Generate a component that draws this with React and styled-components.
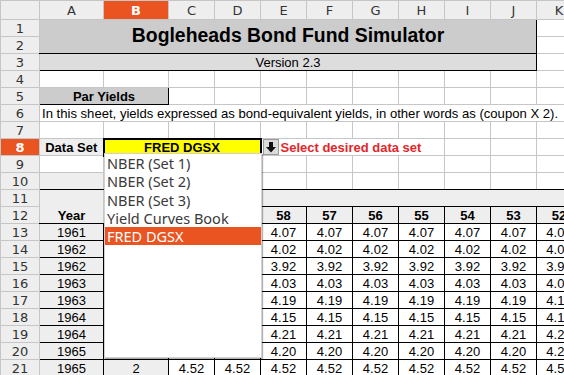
import styled, { createGlobalStyle } from "styled-components"

const GlobalStyle = createGlobalStyle`
  html, body {
    margin: 0;
    padding: 0;
    background: #fff;
    overflow: hidden;
  }
`

const Sheet = styled.div`
  position: relative;
  width: 564px;
  height: 375px;
  overflow: hidden;
  font-family: "Liberation Sans", Arial, sans-serif;
  font-size: 13px;
  color: #000;
`

const Grid = styled.table`
  border-collapse: collapse;
  table-layout: fixed;
  width: 582px;
`

const Col = styled.col`
  width: ${p => p.$w}px;
`

const Row = styled.tr`
  height: ${p => p.$h || 17}px;
`

const grey = "1px solid #c6c6c6"
const side = (k, s, w) => (k && k.includes(s) ? `${w || 1}px solid #000` : grey)

const Head = styled.th`
  padding: 0;
  border: ${grey};
  background: ${p => (p.$active ? "#e95420" : "#eeeeee")};
  color: ${p => (p.$active ? "#fff" : "#333")};
  font-family: "DejaVu Sans", "Noto Sans", sans-serif;
  font-size: 13px;
  font-weight: ${p => (p.$active ? 700 : 400)};
  text-align: center;
  line-height: 15px;
  overflow: hidden;
  white-space: nowrap;
`

const Cell = styled.td`
  padding: 0 2px;
  border-top: ${p => side(p.$k, "t", p.$w)};
  border-right: ${p => side(p.$k, "r", p.$w)};
  border-bottom: ${p => side(p.$k, "b", p.$w)};
  border-left: ${p => side(p.$k, "l", p.$w)};
  background: ${p => p.$bg || "transparent"};
  font-size: ${p => p.$size || 13}px;
  font-weight: ${p => (p.$bold ? 700 : 400)};
  text-align: ${p => p.$align || "left"};
  vertical-align: ${p => p.$valign || "middle"};
  white-space: nowrap;
  overflow: hidden;
  line-height: 15px;
`

const Title = styled.span`
  font-size: 19.4px;
  font-weight: 700;
`

const Note = styled.div`
  display: flex;
  align-items: center;
  gap: 2px;
  color: #e3262a;
  font-weight: 700;
`

const DropButton = styled.span`
  display: inline-flex;
  align-items: center;
  justify-content: center;
  width: 14px;
  height: 14px;
  background: #dcdcdc;
  border: 1px solid #9a9a9a;
  margin-left: -1px;
`

const ListBox = styled.div`
  position: absolute;
  left: 104px;
  top: 153px;
  width: 158px;
  height: 205px;
  background: #fff;
  border: 1px solid #d2d2d2;
  box-shadow: 1px 1px 1px rgba(0, 0, 0, 0.3);
  box-sizing: border-box;
`

const Option = styled.div`
  height: 18.3px;
  line-height: 18px;
  padding-left: 2px;
  font-family: "Noto Sans", "DejaVu Sans", sans-serif;
  font-size: 14.5px;
  color: ${p => (p.$selected ? "#fff" : "#3a3a3a")};
  background: ${p => (p.$selected ? "#e95420" : "transparent")};
  white-space: nowrap;
`

const widths = [39, 64, 65, 46, 46, 46, 46, 46, 46, 46, 46]
const letters = ["A", "B", "C", "D", "E", "F", "G", "H", "I", "J", "K"]
const terms = ["60", "59", "58", "57", "56", "55", "54", "53", "52"]
const yields = [
  ["1961", "4.07"],
  ["1962", "4.02"],
  ["1962", "3.92"],
  ["1963", "4.03"],
  ["1963", "4.19"],
  ["1964", "4.15"],
  ["1964", "4.21"],
  ["1965", "4.20"],
  ["1965", "4.52"],
]
const options = ["NBER (Set 1)", "NBER (Set 2)", "NBER (Set 3)", "Yield Curves Book", "FRED DGSX"]

const Blank = ({ n, k }) => Array.from({ length: n }, (_, i) => <Cell key={i} $k={k} />)

const ArrowDown = () => (
  <svg width="10" height="11" viewBox="0 0 10 11">
    <rect x="3" y="0" width="4" height="5" fill="#111" />
    <polygon points="0,5 10,5 5,10.5" fill="#111" />
  </svg>
)

const App = () => {
  return (
    <Sheet>
      <GlobalStyle />
      <Grid>
        <colgroup>
          {widths.map((w, i) => <Col key={i} $w={w} />)}
        </colgroup>
        <tbody>
          <Row $h={19}>
            <Head />
            {letters.map(l => <Head key={l} $active={l === "B"}>{l}</Head>)}
          </Row>
          <Row>
            <Head>1</Head>
            <Cell colSpan={10} rowSpan={2} $k="rb" $bg="#cccccc" $align="center">
              <Title>Bogleheads Bond Fund Simulator</Title>
            </Cell>
            <Cell />
          </Row>
          <Row>
            <Head>2</Head>
            <Cell />
          </Row>
          <Row>
            <Head>3</Head>
            <Cell colSpan={10} $k="rb" $bg="#dddddd" $align="center">Version 2.3</Cell>
            <Cell />
          </Row>
          <Row>
            <Head>4</Head>
            <Blank n={11} />
          </Row>
          <Row>
            <Head>5</Head>
            <Cell colSpan={2} $k="rb" $bg="#cccccc" $bold $align="center">Par Yields</Cell>
            <Blank n={9} />
          </Row>
          <Row>
            <Head>6</Head>
            <Cell colSpan={11} $size={13.1}>
              In this sheet, yields expressed as bond-equivalent yields, in other words as (coupon X 2).
            </Cell>
          </Row>
          <Row>
            <Head>7</Head>
            <Blank n={11} />
          </Row>
          <Row>
            <Head $active>8</Head>
            <Cell $bg="#eeeeee" $bold $align="center">Data Set</Cell>
            <Cell colSpan={3} $k="trbl" $w={2} $bg="#ffff00" $bold $align="center">FRED DGSX</Cell>
            <Cell colSpan={4}>
              <Note>
                <DropButton><ArrowDown /></DropButton>
                Select desired data set
              </Note>
            </Cell>
            <Blank n={3} />
          </Row>
          <Row>
            <Head>9</Head>
            <Blank n={11} />
          </Row>
          <Row>
            <Head>10</Head>
            <Cell $k="b" $bg="#eeeeee" />
            <Blank n={10} k="b" />
          </Row>
          <Row>
            <Head>11</Head>
            <Cell rowSpan={2} $k="tb" $bg="#eeeeee" $bold $align="center" $valign="bottom">Year</Cell>
            <Cell colSpan={10} $k="tb" $bg="#eeeeee" />
          </Row>
          <Row>
            <Head>12</Head>
            <Cell $k="trbl" $bg="#eeeeee" $bold $align="center" />
            {terms.map(t => (
              <Cell key={t} $k="trbl" $bg="#eeeeee" $bold $align="center">{t}</Cell>
            ))}
          </Row>
          {yields.map(([year, y], i) => (
            <Row key={i}>
              <Head>{13 + i}</Head>
              <Cell $k="trbl" $bg="#eeeeee" $align="center">{year}</Cell>
              <Cell $k="trbl" $bg="#eeeeee" $align="center">2</Cell>
              {terms.map(t => (
                <Cell key={t} $k="trbl" $align="center">{y}</Cell>
              ))}
            </Row>
          ))}
        </tbody>
      </Grid>
      <ListBox>
        {options.map(o => (
          <Option key={o} $selected={o === "FRED DGSX"}>{o}</Option>
        ))}
      </ListBox>
    </Sheet>
  )
}

export default App
